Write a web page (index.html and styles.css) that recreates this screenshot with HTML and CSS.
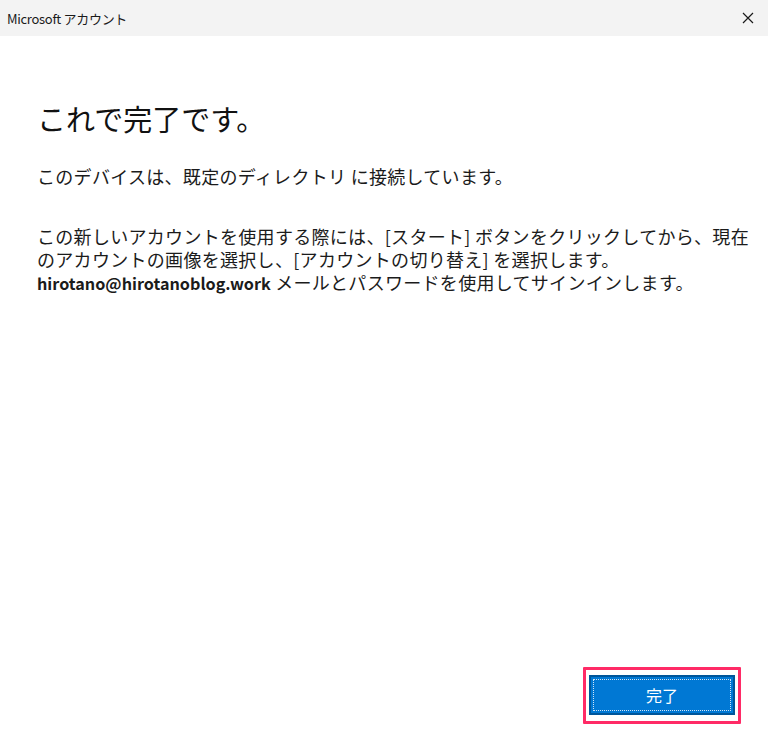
FILE: index.html
```html
<!DOCTYPE html>
<html lang="ja">
<head>
<meta charset="utf-8">
<link rel="stylesheet" href="styles.css">
</head>
<body>
<div class="window">
  <div class="titlebar">
    <span class="title">Microsoft アカウント</span>
    <span class="close"><svg width="12" height="12" viewBox="0 0 12 12"><path d="M1 1L11 11M11 1L1 11" stroke="#1a1a1a" stroke-width="1.2" fill="none"/></svg></span>
  </div>
  <div class="content">
    <h1 class="heading">これで完了です。</h1>
    <p class="para">このデバイスは、既定のディレクトリ に接続しています。</p>
    <p class="para para2">この新しいアカウントを使用する際には、[スタート] ボタンをクリックしてから、現在のアカウントの画像を選択し、[アカウントの切り替え] を選択します。<br><b class="email">hirotano@hirotanoblog.work</b> メールとパスワードを使用してサインインします。</p>
  </div>
  <div class="footer">
    <div class="highlight">
      <button class="done"><span class="focus">完了</span></button>
    </div>
  </div>
</div>
</body>
</html>
```
FILE: styles.css
```css
html, body {
  margin: 0;
  padding: 0;
  height: 100%;
}
body {
  background: #ffffff;
  font-family: "Noto Sans CJK JP", "Noto Sans", sans-serif;
  color: #1b1b1b;
}
.window {
  display: flex;
  flex-direction: column;
  height: 745px;
}
.titlebar {
  height: 36px;
  background: #f3f3f3;
  display: flex;
  align-items: center;
  justify-content: space-between;
  padding: 0 14px 0 7px;
  flex: none;
}
.title {
  font-size: 13px;
  color: #1a1a1a;
  letter-spacing: -0.3px;
}
.close {
  display: flex;
  align-items: center;
}
.content {
  flex: 1;
  padding: 63px 8px 0 37px;
}
.heading {
  margin: 0;
  font-size: 29px;
  line-height: 38px;
  font-weight: 400;
  color: #111;
}
.para {
  margin: 28px 0 0 0;
  font-size: 18px;
  line-height: 23px;
  letter-spacing: 0.3px;
}
.para2 {
  margin-top: 37px;
}
.email {
  font-weight: 700;
  font-size: 16.2px;
  letter-spacing: 0;
}
.footer {
  display: flex;
  justify-content: flex-end;
  padding: 0 27px 21px 0;
  flex: none;
}
.highlight {
  border: 3px solid #ff2a66;
  padding: 5px 3px 6px 3px;
  border-radius: 1px;
}
.done {
  width: 146px;
  height: 40px;
  background: #0078d4;
  border: 2px solid #00569a;
  padding: 2px;
  margin: 0;
  display: block;
  font-family: "Noto Sans CJK JP", sans-serif;
}
.focus {
  display: flex;
  align-items: center;
  justify-content: center;
  height: 100%;
  border: 1px dotted #cfe4f7;
  box-sizing: border-box;
  color: #ffffff;
  font-size: 16px;
}
```
